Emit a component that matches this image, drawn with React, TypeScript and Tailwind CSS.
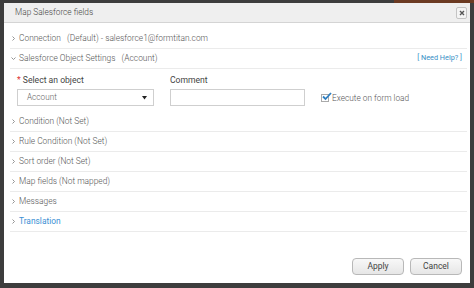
const ROWS = [
  { label: "Condition (Not Set)" },
  { label: "Rule Condition (Not Set)" },
  { label: "Sort order (Not Set)" },
  { label: "Map fields (Not mapped)" },
  { label: "Messages" },
  { label: "Translation", link: true },
];

function Chevron({ down }: { down?: boolean }) {
  return (
    <svg width="5" height="5" viewBox="0 0 5 5" className="ml-[1px] mr-[3px] shrink-0">
      {down ? (
        <path d="M0.5 1.5 L2.5 3.5 L4.5 1.5" fill="none" stroke="#888" strokeWidth="0.9" />
      ) : (
        <path d="M1.5 0.5 L3.5 2.5 L1.5 4.5" fill="none" stroke="#888" strokeWidth="0.9" />
      )}
    </svg>
  );
}

function Row({ children, down, right, link }: { children: React.ReactNode; down?: boolean; right?: React.ReactNode; link?: boolean }) {
  return (
    <div className="h-[20px] flex items-center border-b border-[#ebebeb] pr-[5px]">
      <Chevron down={down} />
      <div className={`flex-1 text-[8.4px] whitespace-pre ${link ? "font-normal text-[#3b8fd4]" : "font-light text-[#555]"}`}>
        {children}
      </div>
      {right}
    </div>
  );
}

export default function App() {
  return (
    <div className="w-[474px] h-[288px] bg-[#3d3d3d] pt-[3px] px-[4px] font-['Roboto','Liberation_Sans',sans-serif] relative overflow-hidden">
      <div className="absolute top-0 right-0 w-[80px] h-[3px] bg-[#6b3a22]" />
      <div className="w-[466px] h-[280px] bg-white flex flex-col">
        {/* Header */}
        <div className="h-[20px] bg-[#efefef] border-b border-[#d4d4d4] flex items-center justify-between pl-[11px] pr-[3px]">
          <span className="text-[8.3px] font-light text-[#444]">Map Salesforce fields</span>
          <div className="w-[11px] h-[12px] border border-[#c4c4c4] rounded-[2px] bg-[#f4f4f4] flex items-center justify-center">
            <svg width="6" height="6" viewBox="0 0 6 6">
              <path d="M1 1 L5 5 M5 1 L1 5" stroke="#555" strokeWidth="1.4" />
            </svg>
          </div>
        </div>

        {/* Body */}
        <div className="pl-[6px] pr-[3px] pt-[6px]">
          <Row>{"Connection   (Default) - salesforce1@formtitan.com"}</Row>
          <Row
            down
            right={<span className="text-[7.3px] text-[#3a8fc6]">[ Need Help? ]</span>}
          >
            {"Salesforce Object Settings   (Account)"}
          </Row>

          <div className="h-[43px] pt-[6px] pl-[7px] flex gap-[16px]">
            <div className="w-[137px] flex flex-col gap-[4px]">
              <div className="h-[10px] leading-[10px] text-[8.6px] text-[#444]">
                <span className="text-[#d33]">*</span> Select an object
              </div>
              <div className="h-[17px] border border-[#cfcfcf] flex items-center justify-between pl-[9px] pr-[6px]">
                <span className="text-[8.2px] font-light text-[#666]">Account</span>
                <svg width="5" height="4" viewBox="0 0 5 4">
                  <path d="M0 0 L5 0 L2.5 3.5 Z" fill="#222" />
                </svg>
              </div>
            </div>
            <div className="w-[135px] flex flex-col gap-[4px]">
              <div className="h-[10px] leading-[10px] text-[8.6px] text-[#444]">Comment</div>
              <div className="h-[17px] border border-[#cfcfcf]" />
            </div>
            <div className="flex items-center pt-[9px] gap-[3px]">
              <div className="relative w-[8px] h-[8px] border border-[#aaa] bg-white">
                <svg width="10" height="9" viewBox="0 0 10 9" className="absolute -top-[3px] left-[0px]">
                  <path d="M1 4.5 L3.5 7 L9 1" fill="none" stroke="#2f7fc1" strokeWidth="1.8" />
                </svg>
              </div>
              <span className="text-[8.3px] font-light text-[#555]">Execute on form load</span>
            </div>
          </div>

          {ROWS.map((r) => (
            <Row key={r.label} link={r.link}>
              {r.label}
            </Row>
          ))}
        </div>

        {/* Footer */}
        <div className="mt-auto flex justify-end gap-[6px] pr-[8px] pb-[8px]">
          <button className="w-[52px] h-[17px] rounded-[4px] border border-[#b8b8b8] bg-gradient-to-b from-[#f8f8f8] to-[#e6e6e6] text-[8.5px] text-[#444]">
            Apply
          </button>
          <button className="w-[52px] h-[17px] rounded-[4px] border border-[#b8b8b8] bg-gradient-to-b from-[#f8f8f8] to-[#e6e6e6] text-[8.5px] text-[#444]">
            Cancel
          </button>
        </div>
      </div>
    </div>
  );
}
